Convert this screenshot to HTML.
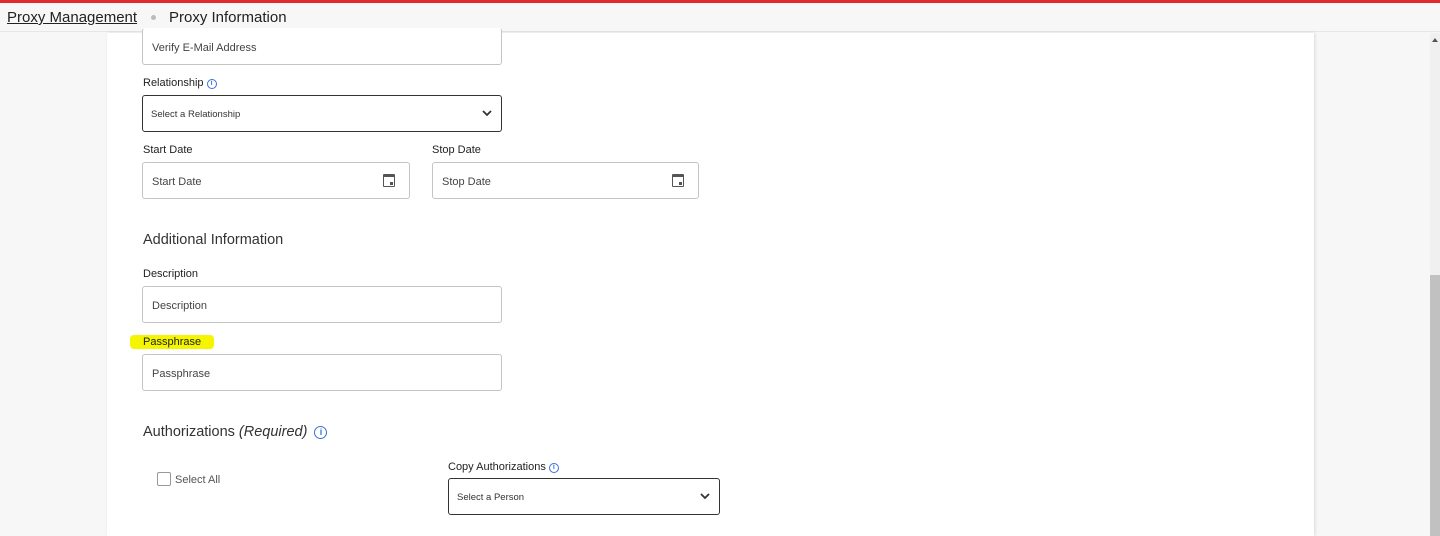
<!DOCTYPE html>
<html><head><meta charset="utf-8"><style>
*{box-sizing:border-box;margin:0;padding:0}
body{width:1440px;height:536px;overflow:hidden;background:#f7f7f7;font-family:"Liberation Sans",sans-serif;color:#222;position:relative}
.a{position:absolute}
.red{left:0;top:0;width:1440px;height:3px;background:#e0282e}
.hdr{left:0;top:3px;width:1440px;height:29px;background:#f7f7f7;border-bottom:1px solid #e6e6e6}
.card{left:107px;top:33px;width:1207px;height:503px;background:#fff;box-shadow:1px 0 3px rgba(0,0,0,.12)}
.lbl{font-size:11px;color:#222}
.in{border:1px solid #c4c4c4;border-radius:3px;height:37px;background:#fff;font-size:11px;color:#444;padding-left:9px;line-height:38px}
.sel{border:1px solid #333;border-radius:3px;height:37px;background:#fff;font-size:9.5px;color:#333;padding-left:8px;line-height:37px}
.h{font-size:14.5px;color:#333}
.info{display:inline-block;width:10px;height:10px;border:1px solid #3a6fd8;border-radius:50%;font-size:7px;color:#3a6fd8;text-align:center;line-height:8px;vertical-align:1px;font-weight:bold}
.chev{position:absolute;right:9px;top:13px}
.cal{position:absolute;right:14px;top:11px;width:12px;height:13px;border:1.5px solid #555;border-top-width:3px;border-radius:1px}
.cal:after{content:"";position:absolute;right:1px;bottom:1px;width:3px;height:3px;background:#555}
</style></head><body>
<div class="a red"></div>
<div class="a hdr">
<span class="a" style="left:7px;top:6px;font-size:15px;color:#222;text-decoration:underline">Proxy Management</span>
<span class="a" style="left:151px;top:12px;width:5px;height:5px;border-radius:50%;background:#bbb"></span>
<span class="a" style="left:169px;top:6px;font-size:15px;color:#222">Proxy Information</span>
</div>
<div class="a" style="left:1430px;top:33px;width:10px;height:503px;background:#f0f0f0"></div>
<div class="a" style="left:1430px;top:275px;width:10px;height:261px;background:#c1c1c1"></div>
<div class="a" style="left:1432px;top:38px;width:0;height:0;border-left:3px solid transparent;border-right:3px solid transparent;border-bottom:4px solid #555"></div>
<div class="a card"></div>

<div class="a in" style="left:142px;top:28px;width:360px;border-top-color:transparent">Verify E-Mail Address</div>
<div class="a lbl" style="left:143px;top:77px">Relationship <span class="info">i</span></div>
<div class="a sel" style="left:142px;top:95px;width:360px">Select a Relationship<svg class="chev" width="10" height="8" viewBox="0 0 10 8"><path d="M1 2l4 4 4-4" stroke="#333" stroke-width="1.8" fill="none"/></svg></div>

<div class="a lbl" style="left:143px;top:144px">Start Date</div>
<div class="a in" style="left:142px;top:162px;width:268px">Start Date<span class="cal"></span></div>
<div class="a lbl" style="left:432px;top:144px">Stop Date</div>
<div class="a in" style="left:432px;top:162px;width:267px">Stop Date<span class="cal"></span></div>

<div class="a h" style="left:143px;top:232px">Additional Information</div>
<div class="a lbl" style="left:143px;top:268px">Description</div>
<div class="a in" style="left:142px;top:286px;width:360px">Description</div>
<div class="a" style="left:130px;top:335px;width:84px;height:14px;background:#f5f500;border-radius:4px"></div>
<div class="a lbl" style="left:143px;top:336px">Passphrase</div>
<div class="a in" style="left:142px;top:354px;width:360px">Passphrase</div>

<div class="a h" style="left:143px;top:424px">Authorizations <i>(Required)</i> <span class="info" style="width:13px;height:13px;font-size:9px;line-height:11px;margin-left:3px">i</span></div>
<div class="a" style="left:157px;top:472px;width:14px;height:14px;border:1px solid #999;border-radius:2px"></div>
<div class="a lbl" style="left:175px;top:474px;color:#555">Select All</div>
<div class="a lbl" style="left:448px;top:461px">Copy Authorizations <span class="info">i</span></div>
<div class="a sel" style="left:448px;top:478px;width:272px">Select a Person<svg class="chev" width="10" height="8" viewBox="0 0 10 8"><path d="M1 2l4 4 4-4" stroke="#333" stroke-width="1.8" fill="none"/></svg></div>
</body></html>
